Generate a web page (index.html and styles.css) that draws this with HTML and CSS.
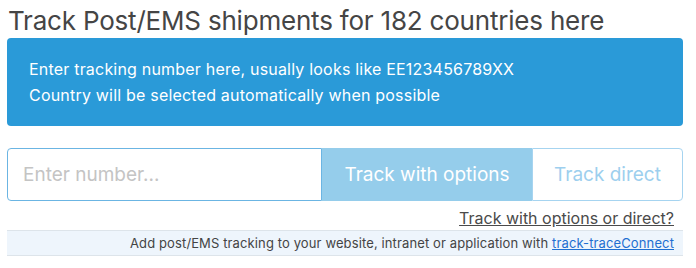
FILE: index.html
```html
<!DOCTYPE html>
<html>
<head>
<meta charset="utf-8">
<link rel="stylesheet" href="styles.css">
</head>
<body>
<div class="page">
  <h1 class="title">Track Post/EMS shipments for 182 countries here</h1>
  <div class="info">
    <p>Enter tracking number here, usually looks like EE123456789XX</p>
    <p>Country will be selected automatically when possible</p>
  </div>
  <div class="track-row">
    <input class="track-input" type="text" placeholder="Enter number...">
    <button class="btn btn-options">Track with options</button>
    <button class="btn btn-direct">Track direct</button>
  </div>
  <div class="help-row"><a class="help-link" href="#">Track with options or direct?</a></div>
  <div class="connect">Add post/EMS tracking to your website, intranet or application with <a href="#">track-traceConnect</a></div>
</div>
</body>
</html>
```
FILE: styles.css
```css
* { box-sizing: border-box; }
html, body { margin: 0; padding: 0; background: #fff; }
body { font-family: Inter, "Noto Sans", sans-serif; color: #444; }
.page { padding: 0 13px 0 7px; }
.title {
  margin: 0;
  padding: 3px 0 0 1px;
  font-size: 26px;
  font-weight: 400;
  line-height: 35px;
  color: #454545;
  letter-spacing: -0.2px;
}
.info {
  margin-top: 0;
  background: #2a9ad8;
  border-radius: 4px;
  padding: 18px 22px 18px;
  color: #fff;
  font-size: 16px;
  line-height: 26px;
  letter-spacing: 0.2px;
}
.info p { margin: 0; }
.track-row {
  display: flex;
  margin-top: 22px;
  height: 53px;
}
.track-input {
  width: 315px;
  height: 100%;
  border: 1px solid #6bb5e3;
  border-radius: 4px 0 0 4px;
  padding: 0 15px;
  font-family: inherit;
  font-size: 19px;
  color: #444;
  outline: none;
}
.track-input::placeholder { color: #c4c4c4; }
.btn {
  height: 100%;
  font-family: inherit;
  font-size: 19px;
  border: 1px solid #a6d4f0;
  padding: 0;
}
.btn-options {
  width: 210px;
  background: #95cdeb;
  color: #fff;
  border-color: #95cdeb;
}
.btn-direct {
  width: 151px;
  background: #fff;
  color: #9dcfee;
  border-radius: 0 4px 4px 0;
}
.help-row {
  display: flex;
  justify-content: flex-end;
  padding: 7px 9px 0 0;
  height: 29px;
}
.help-link {
  color: #4a4a4a;
  font-size: 16px;
  line-height: 20px;
}
.connect {
  height: 26px;
  background: #eef5fc;
  border-top: 1px solid #dde4ea;
  border-bottom: 1px solid #dde4ea;
  text-align: right;
  padding: 0 9px;
  font-size: 13px;
  line-height: 24px;
  letter-spacing: 0.12px;
  color: #444;
}
.connect a { color: #1f6fd1; }
```
